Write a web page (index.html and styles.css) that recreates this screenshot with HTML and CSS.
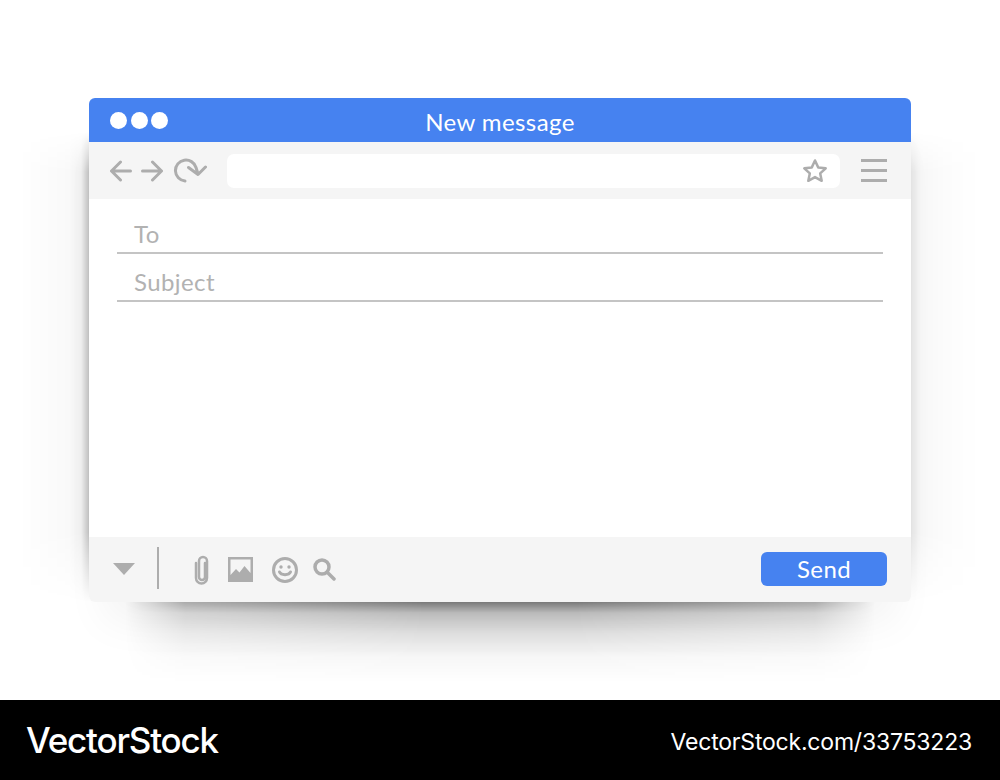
FILE: index.html
```html
<!DOCTYPE html>
<html lang="en">
  <head>
    <meta charset="UTF-8" />
    <title>New message</title>
    <link rel="stylesheet" href="styles.css">
  </head>
  <body>
    <div class="stage">
      <div class="window">
        <div class="titlebar">
          <div class="dots"><span></span><span></span><span></span></div>
          <div class="title">New message</div>
        </div>
        <div class="toolbar">
          <div class="nav">
            <svg class="icon" width="22" height="22" viewBox="0 0 22 22"><path d="M20.5 11H2M10.5 2 1.5 11l9 9"/></svg>
            <svg class="icon" width="22" height="22" viewBox="0 0 22 22"><path d="M1.5 11H20M11.5 2l9 9-9 9"/></svg>
            <svg class="icon reload" width="34" height="26" viewBox="0 0 34 26"><path d="M12 24A10.500 10.500 0 1 1 23 10.500L25 17M15.500 10.500l9.500 7 7.500-7.500"/></svg>
          </div>
          <div class="address">
            <svg class="icon star" width="26" height="26" viewBox="0 0 26 26"><path d="M13 2.500l3.200 6.900 7.500.9-5.500 5.100 1.500 7.400-6.700-3.700-6.700 3.700 1.500-7.400-5.500-5.100 7.500-.9z"/></svg>
          </div>
          <div class="menu"><span></span><span></span><span></span></div>
        </div>
        <div class="content">
          <div class="field">To</div>
          <div class="field">Subject</div>
        </div>
        <div class="actions">
          <div class="caret"></div>
          <div class="divider"></div>
          <div class="tools">
            <svg class="icon clip" width="18" height="30" viewBox="0 0 18 30"><path d="M12 8v14a3 3 0 0 1-6 0V6a4 4 0 0 1 8 0v17a5.500 5.500 0 0 1-11 0V8"/></svg>
            <svg class="solid" width="25" height="25" viewBox="0 0 25 25"><path fill-rule="evenodd" d="M0 0h25v25H0zM2.500 2.500v15.500l5.500-6 3.500 3.500 5-6.500 6 7V2.500z"/></svg>
            <svg class="icon" width="26" height="26" viewBox="0 0 26 26"><circle cx="13" cy="13" r="11.500"/><path d="M7.500 15c1.500 3.500 9.500 3.500 11 0"/><circle class="eye" cx="9" cy="10" r="1.700"/><circle class="eye" cx="17" cy="10" r="1.700"/></svg>
            <svg class="icon search" width="23" height="23" viewBox="0 0 23 23"><circle cx="9" cy="9" r="7"/><path d="m14.500 14.500 6.500 6.500"/></svg>
          </div>
          <button class="send">Send</button>
        </div>
      </div>
    </div>
    <div class="watermark">
      <div class="brand">VectorStock</div>
      <div class="link">VectorStock.com/33753223</div>
    </div>
  </body>
</html>
```
FILE: styles.css
```css
* {
  box-sizing: border-box;
}

body {
  margin: 0;
  background: #fff;
  font-family: 'Lato', 'Open Sans', sans-serif;
}

.stage {
  height: 700px;
  padding: 98px 89px 0;
  overflow: hidden;
}

.window {
  position: relative;
  height: 504px;
  display: flex;
  flex-direction: column;
  border-radius: 6px;
  background: #fff;
  box-shadow: 0 35px 40px -15px rgba(0, 0, 0, 0.05);
}

/* wide shadow on the left and right sides */
.window::before {
  content: "";
  position: absolute;
  z-index: -1;
  left: -70px;
  right: -70px;
  top: 34px;
  bottom: 0;
  background: linear-gradient(to right,
    transparent 0,
    rgba(0, 0, 0, 0.012) 25px,
    rgba(0, 0, 0, 0.025) 50px,
    rgba(0, 0, 0, 0.06) 62px,
    rgba(0, 0, 0, 0.24) 70px,
    rgba(0, 0, 0, 0.1) calc(100% - 70px),
    rgba(0, 0, 0, 0.03) calc(100% - 60px),
    rgba(0, 0, 0, 0.012) calc(100% - 35px),
    transparent 100%);
  -webkit-mask-image: linear-gradient(to bottom, transparent, #000 40px, #000 calc(100% - 70px), transparent);
  mask-image: linear-gradient(to bottom, transparent, #000 40px, #000 calc(100% - 70px), transparent);
}

/* darker shadow under the bottom edge */
.window::after {
  content: "";
  position: absolute;
  z-index: -1;
  left: 36px;
  right: 36px;
  top: 100%;
  height: 80px;
  background: linear-gradient(to bottom,
    rgba(0, 0, 0, 0.5),
    rgba(0, 0, 0, 0.24) 14%,
    rgba(0, 0, 0, 0.12) 38%,
    rgba(0, 0, 0, 0.03) 70%,
    transparent);
  -webkit-mask-image: linear-gradient(to right, transparent, rgba(0, 0, 0, 0.6) 8%, #000 40%, #000 60%, rgba(0, 0, 0, 0.6) 92%, transparent);
  mask-image: linear-gradient(to right, transparent, rgba(0, 0, 0, 0.6) 8%, #000 40%, #000 60%, rgba(0, 0, 0, 0.6) 92%, transparent);
}

.titlebar {
  height: 44px;
  flex: none;
  position: relative;
  display: flex;
  align-items: center;
  justify-content: center;
  background: #4682f0;
  border-radius: 6px 6px 0 0;
}

.dots {
  position: absolute;
  left: 21px;
  top: 14px;
  display: flex;
  gap: 3.5px;
}

.dots span {
  width: 17px;
  height: 17px;
  border-radius: 50%;
  background: #fff;
}

.title {
  color: #fff;
  font-size: 24px;
  letter-spacing: 0.4px;
  padding-top: 2px;
}

.toolbar {
  height: 57px;
  flex: none;
  display: flex;
  align-items: center;
  padding: 0 24px 0 21px;
  background: #f5f5f5;
}

.icon {
  fill: none;
  stroke: #adadad;
  stroke-width: 3;
  stroke-linecap: round;
  stroke-linejoin: round;
}

.star {
  stroke-width: 2.5;
}

.nav {
  display: flex;
  align-items: center;
  gap: 9px;
  width: 117px;
}

.reload {
  margin-left: 1px;
  margin-top: -2px;
}

.address {
  flex: 1;
  height: 34px;
  display: flex;
  align-items: center;
  justify-content: flex-end;
  padding-right: 12px;
  background: #fff;
  border-radius: 7px;
}

.menu {
  width: 26px;
  margin-left: 21px;
  display: flex;
  flex-direction: column;
  gap: 7px;
}

.menu span {
  height: 3px;
  background: #adadad;
}

.content {
  flex: 1;
  padding: 7px 28px 0;
}

.field {
  height: 48px;
  padding: 15px 0 0 17px;
  border-bottom: 2px solid #c4c4c4;
  color: #b2b2b2;
  font-size: 24px;
  line-height: 26px;
  letter-spacing: 0.4px;
}

.actions {
  height: 65px;
  flex: none;
  display: flex;
  align-items: center;
  padding: 0 24px;
  background: #f5f5f5;
  border-radius: 0 0 6px 6px;
}

.caret {
  width: 0;
  height: 0;
  margin-bottom: 2px;
  border-left: 11px solid transparent;
  border-right: 11px solid transparent;
  border-top: 12px solid #adadad;
}

.divider {
  width: 2px;
  height: 42px;
  margin-left: 22px;
  margin-bottom: 4px;
  background: #adadad;
}

.tools {
  display: flex;
  align-items: center;
  gap: 17px;
  margin-left: 34px;
}

.solid {
  fill: #adadad;
  margin-right: 2px;
}

.clip {
  stroke-width: 2.5;
}

.eye {
  fill: #adadad;
  stroke: none;
}

.tools .search {
  stroke-width: 3.5;
  margin-left: -2px;
}

.send {
  width: 126px;
  height: 34px;
  margin-left: auto;
  margin-bottom: 2px;
  border: 0;
  border-radius: 6px;
  background: #4682f0;
  color: #fff;
  font-family: inherit;
  font-size: 24px;
  letter-spacing: 0.4px;
  line-height: 34px;
  padding: 0;
}

.watermark {
  height: 80px;
  display: flex;
  align-items: center;
  justify-content: space-between;
  padding: 0 28px 0 26px;
  background: #000;
  color: #fff;
  font-family: 'Inter', 'Liberation Sans', sans-serif;
}

.brand {
  font-size: 35px;
  font-weight: 500;
  letter-spacing: -1.2px;
}

.link {
  font-size: 23px;
  letter-spacing: -0.2px;
  padding-top: 4px;
}
```
